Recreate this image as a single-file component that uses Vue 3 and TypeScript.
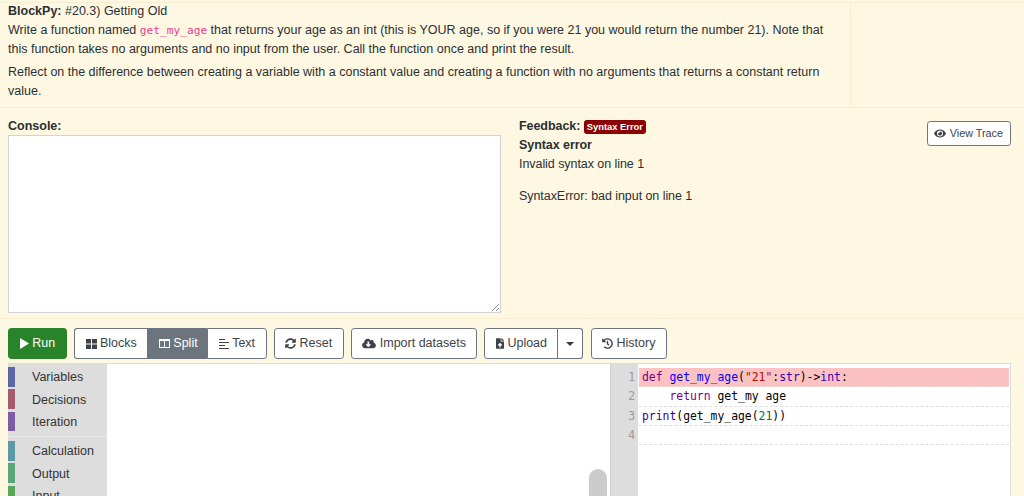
<script setup lang="ts">
const categories = [
  { name: 'Variables', color: '#5b67a5' },
  { name: 'Decisions', color: '#a55b6e' },
  { name: 'Iteration', color: '#7e5ba5' },
  { name: 'Calculation', color: '#5b9aa5', gap: true },
  { name: 'Output', color: '#5ba578' },
  { name: 'Input', color: '#5ba55b' },
]
</script>

<template>
  <div class="page">
    <section class="prompt">
      <div class="prompt-text">
        <div><strong>BlockPy:</strong> #20.3) Getting Old</div>
        <p>Write a function named <code>get_my_age</code> that returns your age as an int (this is YOUR age, so if you were 21 you would return the number 21). Note that this function takes no arguments and no input from the user. Call the function once and print the result.</p>
        <p>Reflect on the difference between creating a variable with a constant value and creating a function with no arguments that returns a constant return value.</p>
      </div>
      <div class="prompt-side"></div>
    </section>

    <section class="io">
      <div class="console">
        <strong class="label">Console:</strong>
        <div class="console-box">
          <svg class="grip" width="8" height="8" viewBox="0 0 8 8"><path d="M8 1 1 8M8 5 5 8" stroke="#888" fill="none" /></svg>
        </div>
      </div>
      <div class="feedback">
        <div><strong>Feedback:</strong> <span class="badge">Syntax Error</span></div>
        <strong class="fb-title">Syntax error</strong>
        <div>Invalid syntax on line 1</div>
        <div class="fb-detail">SyntaxError: bad input on line 1</div>
      </div>
      <button class="btn trace">
        <svg class="ico" width="12" height="11" viewBox="0 0 576 512"><path d="M572.52 241.4C518.29 135.59 410.93 64 288 64S57.68 135.64 3.48 241.41a32.35 32.35 0 0 0 0 29.19C57.71 376.41 165.07 448 288 448s230.32-71.64 284.52-177.41a32.35 32.35 0 0 0 0-29.19zM288 400a144 144 0 1 1 144-144 143.93 143.93 0 0 1-144 144zm0-240a95.31 95.31 0 0 0-25.31 3.79 47.85 47.85 0 0 1-66.9 66.9A95.78 95.78 0 1 0 288 160z"/></svg>
        View Trace
      </button>
    </section>

    <nav class="toolbar">
      <button class="btn run">
        <svg class="ico" width="9" height="11" viewBox="0 0 10 12"><path d="M0 0v12l10-6z"/></svg>
        Run
      </button>
      <div class="group">
        <button class="btn">
          <svg class="ico" width="11" height="10" viewBox="0 0 11 10"><path d="M0 0h5v4.5H0zM6 0h5v4.5H6zM0 5.5h5V10H0zM6 5.5h5V10H6z"/></svg>
          Blocks
        </button>
        <button class="btn active">
          <svg class="ico" width="11" height="9" viewBox="0 0 11 9"><path fill-rule="evenodd" d="M0 0h11v9H0zM1 2v6h4V2zM6 2v6h4V2z"/></svg>
          Split
        </button>
        <button class="btn">
          <svg class="ico" width="10" height="10" viewBox="0 0 10 10"><path d="M0 0h6v1H0zM0 3h10v1H0zM0 6h6v1H0zM0 9h10v1H0z"/></svg>
          Text
        </button>
      </div>
      <button class="btn">
        <svg class="ico" width="11" height="11" viewBox="0 0 512 512"><path d="M370.72 133.28C339.458 104.008 298.888 87.962 255.848 88c-77.458.068-144.328 53.178-162.791 126.85-1.344 5.363-6.122 9.15-11.651 9.15H24.103c-7.498 0-13.194-6.807-11.807-14.176C33.933 94.924 134.813 8 256 8c66.448 0 126.791 26.136 171.315 68.685L463.03 40.97C478.149 25.851 504 36.559 504 57.941V192c0 13.255-10.745 24-24 24H345.941c-21.382 0-32.09-25.851-16.971-40.971l41.75-41.749zM32 296h134.059c21.382 0 32.09 25.851 16.971 40.971l-41.75 41.75c31.262 29.273 71.835 45.319 114.876 45.28 77.418-.07 144.315-53.144 162.787-126.849 1.344-5.363 6.122-9.15 11.651-9.15h57.304c7.498 0 13.194 6.807 11.807 14.176C478.067 417.076 377.187 504 256 504c-66.448 0-126.791-26.136-171.315-68.685L48.97 471.03C33.851 486.149 8 475.441 8 454.059V320c0-13.255 10.745-24 24-24z"/></svg>
        Reset
      </button>
      <button class="btn">
        <svg class="ico" width="14" height="11" viewBox="0 0 640 512"><path d="M537.6 226.6c4.1-10.7 6.4-22.4 6.4-34.6 0-53-43-96-96-96-19.7 0-38.1 6-53.3 16.2C367 64.2 315.3 32 256 32c-88.4 0-160 71.6-160 160 0 2.7.1 5.4.2 8.1C40.2 219.8 0 273.2 0 336c0 79.5 64.5 144 144 144h368c70.7 0 128-57.3 128-128 0-61.9-44-113.6-102.4-125.4zm-132.9 88.7L299.3 420.7c-6.2 6.2-16.4 6.2-22.6 0L171.3 315.3c-10.1-10.1-2.9-27.3 11.3-27.3H248V176c0-8.8 7.2-16 16-16h48c8.8 0 16 7.2 16 16v112h65.4c14.2 0 21.4 17.2 11.3 27.3z"/></svg>
        Import datasets
      </button>
      <div class="group split">
        <button class="btn">
          <svg class="ico" width="8" height="11" viewBox="0 0 384 512"><path d="M224 136V0H24C10.7 0 0 10.7 0 24v464c0 13.3 10.7 24 24 24h336c13.3 0 24-10.7 24-24V160H248c-13.2 0-24-10.8-24-24zm65.18 216.01H224v80c0 8.84-7.16 16-16 16h-32c-8.84 0-16-7.16-16-16v-80H94.82c-14.28 0-21.41-17.29-11.27-27.36l96.42-95.7c6.65-6.61 17.39-6.61 24.04 0l96.42 95.7c10.15 10.07 3.03 27.36-11.25 27.36zM377 105L279.1 7c-4.5-4.5-10.6-7-17-7H256v128h128v-6.1c0-6.3-2.5-12.4-7-16.9z"/></svg>
          Upload
        </button>
        <button class="btn caret-btn"><span class="caret"></span></button>
      </div>
      <button class="btn history">
        <svg class="ico" width="11" height="11" viewBox="0 0 512 512"><path d="M504 255.531c.253 136.64-111.18 248.372-247.82 248.468-59.015.042-113.223-20.53-155.822-54.911-11.077-8.94-11.905-25.541-1.839-35.607l11.267-11.267c8.609-8.609 22.353-9.551 31.891-1.984C173.062 425.135 212.781 440 256 440c101.705 0 184-82.311 184-184 0-101.705-82.311-184-184-184-48.814 0-93.149 18.969-126.068 49.932l50.754 50.754c10.08 10.08 2.941 27.314-11.313 27.314H24c-8.837 0-16-7.163-16-16V38.627c0-14.254 17.234-21.393 27.314-11.314l49.372 49.372C129.209 34.136 189.552 8 256 8c136.81 0 247.747 110.78 248 247.531zm-180.912 78.784l9.823-12.63c8.138-10.463 6.253-25.542-4.21-33.679L288 256.349V152c0-13.255-10.745-24-24-24h-16c-13.255 0-24 10.745-24 24v135.651l65.409 50.874c10.463 8.137 25.541 6.253 33.679-4.21z"/></svg>
        History
      </button>
    </nav>

    <section class="workspace">
      <div class="toolbox">
        <div v-for="c in categories" :key="c.name" class="cat" :class="{ 'cat-gap': c.gap }">
          <span class="swatch" :style="{ background: c.color }"></span>
          <span class="cat-name">{{ c.name }}</span>
        </div>
      </div>
      <div class="canvas"><span class="thumb"></span></div>
      <div class="editor">
        <div class="gutter">
          <div>1</div><div>2</div><div>3</div><div>4</div>
        </div>
        <div class="lines">
          <div class="line err"><span class="kw">def</span>&nbsp;<span class="fn">get_my_age</span>(<span class="str">"21"</span>:<span class="bi">str</span>)-&gt;<span class="bi">int</span>:</div>
          <div class="line">&nbsp;&nbsp;&nbsp;&nbsp;<span class="kw">return</span>&nbsp;get_my&nbsp;age</div>
          <div class="line"><span class="bi">print</span>(get_my_age(<span class="num">21</span>))</div>
          <div class="line"></div>
        </div>
      </div>
    </section>
  </div>
</template>

<style>
html, body { margin: 0; background: #fef8e3; }
</style>

<style scoped>
.page {
  height: 496px;
  overflow: hidden;
  box-sizing: border-box;
  padding-top: 2px;
  background: #fef8e3;
  color: #2b2f33;
  font: 12.5px/18.75px "Liberation Sans", Arial, sans-serif;
}
strong { font-weight: 700; }
.prompt {
  display: flex;
  height: 106px;
  box-sizing: border-box;
  border-top: 1px solid #faeed2;
  border-bottom: 1px solid #faeed2;
}
.prompt-text {
  flex: none;
  width: 850px;
  box-sizing: border-box;
  padding: 0 8px;
  margin-top: -1px;
}
.prompt-text p { margin: 4px 0 0; }
.prompt-text div + p { margin-top: 0.5px; }
.prompt-side { flex: 1; border-left: 1px solid #faeed2; }
code {
  font: 11.2px "DejaVu Sans Mono", monospace;
  color: #e83e8c;
}
.io {
  display: flex;
  height: 211px;
  box-sizing: border-box;
  padding: 9px 13px 0 8px;
  border-bottom: 1px solid #faeed2;
}
.console { flex: none; width: 493px; }
.label { display: block; height: 18px; }
.console-box {
  position: relative;
  height: 178px;
  box-sizing: border-box;
  background: #fff;
  border: 1px solid #ced4da;
}
.grip { position: absolute; right: 1px; bottom: 1px; }
.feedback { flex: 1; margin-left: 18px; letter-spacing: -0.06px; }
.badge {
  display: inline-block;
  padding: 2px 3px;
  background: #8b0000;
  color: #fff;
  font-size: 9.4px;
  line-height: 10px;
  font-weight: 700;
  letter-spacing: 0;
  border-radius: 3px;
  vertical-align: 0;
}
.fb-title { display: block; }
.fb-detail { margin-top: 14px; }
.btn {
  display: inline-flex;
  align-items: center;
  gap: 3.5px;
  box-sizing: border-box;
  height: 31px;
  padding: 0 10.5px;
  background: #fff;
  color: #3d4349;
  border: 1px solid #6c757d;
  border-radius: 3.2px;
  font: 12.5px/18.75px "Liberation Sans", Arial, sans-serif;
}
.ico { flex: none; fill: currentColor; }
.trace {
  flex: none;
  align-self: flex-start;
  height: 25px;
  margin-top: 4px;
  padding: 0 7px 0 6px;
  font-size: 10.8px;
}
.toolbar {
  display: flex;
  gap: 7px;
  margin-top: 9px;
  padding: 0 8px;
}
.run {
  background: #28842a;
  border-color: #28842a;
  color: #fff;
  width: 59px;
  justify-content: center;
}
.group { display: flex; }
.group .btn { border-radius: 0; border-right-width: 0; }
.group .btn:first-child { border-radius: 3.2px 0 0 3.2px; }
.group .btn:last-child { border-radius: 0 3.2px 3.2px 0; border-right-width: 1px; }
.group .active { background: #6c757d; color: #fff; padding-right: 9.5px; }
.split .btn:first-child { border-right-width: 1px; padding-right: 9.5px; }
.split .caret-btn { border-left-width: 0; width: 25px; padding: 0; justify-content: center; }
.caret { border: 4px solid transparent; border-top-color: #343a40; border-bottom-width: 0; }
.history { margin-left: 1px; }
.workspace {
  display: flex;
  box-sizing: border-box;
  height: 140px;
  margin: 4px 13px 0 8px;
  background: #fff;
  border-right: 1px solid #ddd;
  border-top: 1px solid #ddd;
}
.toolbox {
  flex: none;
  width: 99px;
  padding-top: 3px;
  background: #ddd;
  color: #333;
}
.cat {
  display: flex;
  align-items: center;
  gap: 17px;
  height: 19.5px;
  margin-bottom: 2.8px;
}
.cat-name { padding-top: 2px; }
.cat-gap {
  margin-top: 10px;
  position: relative;
}
.cat-gap::before {
  content: "";
  position: absolute;
  left: 0;
  right: 0;
  top: -5px;
  border-top: 1px solid #e8e8e8;
}
.swatch { width: 7px; height: 100%; }
.canvas { position: relative; flex: none; width: 503px; }
.thumb {
  position: absolute;
  right: 3px;
  top: 105px;
  width: 18px;
  height: 60px;
  background: #ccc;
  border-radius: 9px;
}
.editor {
  flex: 1;
  display: flex;
  font: 11.4px/19.3px "DejaVu Sans Mono", monospace;
  color: #000;
}
.gutter {
  flex: none;
  width: 28px;
  box-sizing: border-box;
  padding: 4px 3px 0 0;
  background: #ddd;
  border-left: 1px solid #d0d0d0;
  color: #999;
  text-align: right;
}
.lines { flex: 1; padding-top: 4px; margin: 0 1px; }
.line {
  height: 19.3px;
  box-sizing: border-box;
  padding-left: 3px;
  white-space: pre;
  border-bottom: 1px dashed #ddd;
}
.err { background: #fcc2c2; }
.kw { color: #708; }
.fn { color: #00f; }
.str { color: #a11; }
.bi { color: #30a; }
.num { color: #164; }
</style>
